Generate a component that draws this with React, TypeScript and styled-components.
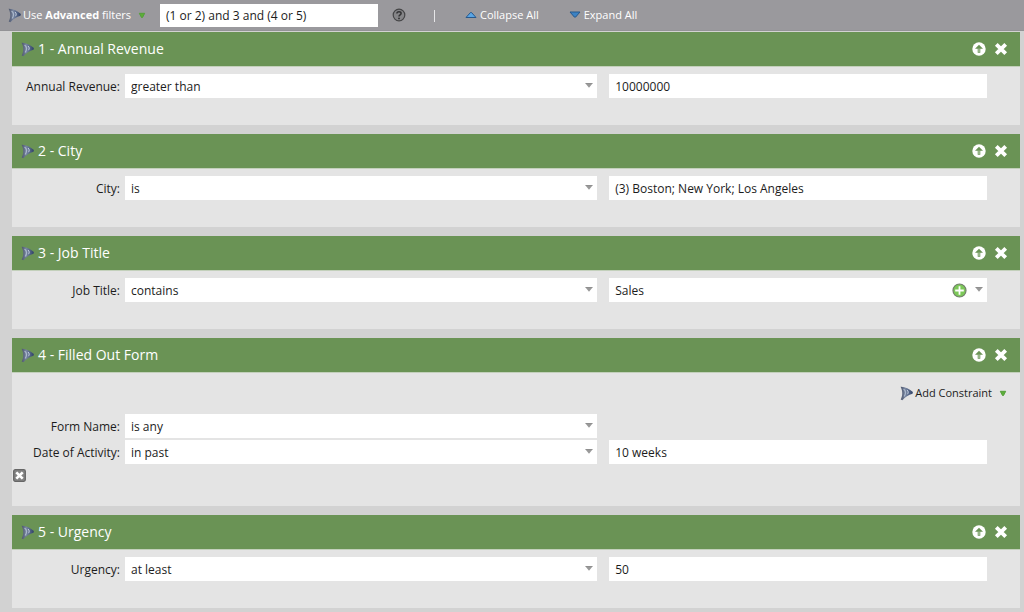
import React, { useId } from "react";
import styled, { createGlobalStyle } from "styled-components";

const GlobalStyle = createGlobalStyle`
  *, *::before, *::after { box-sizing: border-box; }
  body {
    margin: 0;
    background: #d2d2d2;
    color: #1c1c1c;
    font-family: "Open Sans", "Noto Sans", sans-serif;
    font-size: 12px;
  }
  button, input, select { font: inherit; color: inherit; }
  svg { flex-shrink: 0; }
`;

const Toolbar = styled.header`
  display: flex;
  align-items: center;
  height: 31px;
  padding: 0 8px;
  background: #9a999d;
  border-bottom: 1px solid #939396;
  color: #fff;
`;

const PlainButton = styled.button`
  display: inline-flex;
  align-items: center;
  gap: 2px;
  padding: 0;
  border: 0;
  background: none;
  font-size: 11px;
  line-height: 16px;
  white-space: nowrap;
  cursor: pointer;
`;

const ModeButton = styled(PlainButton)`
  width: 140px;
  margin-right: 12px;
`;

const MenuMark = styled.span`
  display: inline-flex;
  margin-left: 5px;
`;

const LogicInput = styled.input`
  width: 218px;
  height: 23px;
  padding: 0 6px;
  border: 0;
  background: #fff;
  color: #1c1c1c;
`;

const HelpButton = styled(PlainButton)`
  margin-left: 14px;
`;

const Divider = styled.span`
  width: 1px;
  height: 12px;
  margin: 2px 30px 0 28px;
  background: #e6e6e8;
`;

const ToolbarActions = styled.div`
  display: flex;
  gap: 30px;
`;

const ToolbarAction = styled(PlainButton)`
  gap: 3px;
`;

const CardList = styled.main`
  display: flex;
  flex-direction: column;
  gap: 9px;
  padding: 1px 4px 4px 12px;
`;

const Card = styled.section`
  background: #e4e4e4;
`;

const CardHeader = styled.div`
  display: flex;
  align-items: center;
  height: 34px;
  padding: 0 12px 0 9px;
  background: #6a9355;
  color: #fff;
`;

const CardTitle = styled.h2`
  flex: 1;
  margin: 0 0 0 4px;
  font-size: 14px;
  font-weight: 400;
  line-height: 20px;
`;

const HeaderActions = styled.div`
  display: flex;
  align-items: center;
  gap: 8px;
`;

const CardBody = styled.div`
  padding: 7px 33px 27px 0;
  border-top: 1px solid #c3d0bb;
`;

const ConstraintBar = styled.div`
  display: flex;
  justify-content: flex-end;
  height: 34px;
  padding-top: 5px;
  margin-right: -20px;
`;

const ConstraintButton = styled(PlainButton)`
  height: 16px;
`;

const Rows = styled.div`
  display: grid;
  gap: 2px;
`;

const Row = styled.div`
  display: grid;
  grid-template-columns: 113px minmax(0, 1fr);
  align-items: center;
`;

const RowLabel = styled.label`
  padding-right: 5px;
  text-align: right;
  white-space: nowrap;
`;

const RowFields = styled.div`
  display: grid;
  grid-template-columns: minmax(0, 5fr) minmax(0, 4fr);
  column-gap: 12px;
`;

const Field = styled.div`
  display: flex;
  align-items: center;
  height: 24px;
  background: #fff;
  position: relative;
`;

const Select = styled.select`
  appearance: none;
  width: 100%;
  height: 24px;
  padding: 0 20px 0 6px;
  border: 0;
  background: transparent;
`;

const SelectArrow = styled.span`
  position: absolute;
  top: 9px;
  right: 4px;
  display: flex;
  pointer-events: none;
`;

const ValueInput = styled.input`
  flex: 1;
  min-width: 0;
  height: 24px;
  padding: 0 6px;
  border: 0;
  background: transparent;
`;

const ValueTools = styled.div`
  display: flex;
  align-items: center;
  gap: 8px;
  padding-right: 4px;
`;

const RemoveBar = styled.div`
  display: flex;
  padding: 5px 0 0 1px;
  margin-bottom: -3px;
`;

const Funnel = () => (
  <svg width="13" height="15" viewBox="0 0 13 15" aria-hidden="true">
    <defs>
      <linearGradient id="funnelBody" x1="0" y1="0" x2="1" y2="0">
        <stop offset="0" stopColor="#4d566c" />
        <stop offset="0.4" stopColor="#76849f" />
        <stop offset="0.65" stopColor="#566789" />
        <stop offset="1" stopColor="#2f4166" />
      </linearGradient>
    </defs>
    <path d="M.6 .8C4.500 .5 9.500 3 12.900 5.900L12.500 7.700C8.500 8.800 5.200 11.200 2.400 14.200L.7 13.400C2.600 10.500 3 5.500 .6 .8Z" fill="url(#funnelBody)" />
    <path d="M3.600 3C5.800 4.800 6 7.700 4.200 10.500" fill="none" stroke="#aab7cb" strokeWidth="1.300" />
    <path d="M7 4C8.500 5.200 8.500 6.800 7.500 8.200" fill="none" stroke="#cfd9e8" strokeWidth=".9" />
  </svg>
);

const GreenArrow = () => (
  <svg width="8" height="7" viewBox="0 0 8 7" aria-hidden="true">
    <path d="M1.300 1.300H6.700L4.500 5.500H3.500Z" fill="#5cae38" stroke="#549f3a" strokeLinejoin="round" />
  </svg>
);

const GreyArrow = () => (
  <svg width="8" height="6" viewBox="0 0 8 6" aria-hidden="true">
    <path d="M.5 .5H7.500L4 4.800Z" fill="#999" />
    <path d="M.5 .5H7.500" stroke="#8f8f8f" />
  </svg>
);

const BlueArrow = ({ down = false }: { down?: boolean }) => (
  <svg width="12" height="8" viewBox="0 0 12 8" aria-hidden="true">
    <path
      d={down ? "M1 1H11L6.700 6Q6 6.700 5.300 6Z" : "M1 6.500H11L6.700 1.700Q6 1 5.300 1.700Z"}
      fill={down ? "#3b82c4" : "#5aa5e4"}
      stroke="#27588c"
      strokeLinejoin="round"
    />
  </svg>
);

const HelpIcon = () => (
  <svg width="14" height="14" viewBox="0 0 14 14" aria-hidden="true">
    <circle cx="7" cy="7" r="5.800" fill="#858588" stroke="#454547" strokeWidth="1.200" />
    <path d="M4.900 5.600C4.900 3.200 9.100 3.300 9.100 5.500C9.100 6.900 7 6.900 7 8.500" fill="none" stroke="#333335" strokeWidth="1.500" />
    <circle cx="7" cy="10.400" r=".95" fill="#333335" />
  </svg>
);

const UpIcon = () => (
  <svg width="14" height="14" viewBox="0 0 14 14" aria-hidden="true">
    <circle cx="7" cy="7" r="6.700" fill="#fff" />
    <path d="M7 2.700L11 6.800H8.300V10.700H5.700V6.800H3Z" fill="#6a9355" />
    <path d="M7 6.500V10" stroke="#dbe6d5" strokeWidth=".8" />
  </svg>
);

const CloseIcon = () => (
  <svg width="14" height="14" viewBox="0 0 14 14" aria-hidden="true">
    <path d="M2.300 2.300L11.700 11.700M11.700 2.300L2.300 11.700" stroke="#fff" strokeWidth="3.800" />
  </svg>
);

const PlusIcon = () => (
  <svg width="15" height="15" viewBox="0 0 15 15" aria-hidden="true">
    <circle cx="7.500" cy="7.500" r="6.500" fill="#7cc858" stroke="#71806a" strokeWidth="1.200" />
    <path d="M7.500 3.200V11.800M3.200 7.500H11.800" stroke="#fff" strokeWidth="1.800" />
  </svg>
);

const RemoveIcon = () => (
  <svg width="13" height="13" viewBox="0 0 13 13" aria-hidden="true">
    <rect x=".7" y=".7" width="11.600" height="11.600" rx="1.500" fill="#858585" stroke="#666" strokeWidth="1.300" />
    <path d="M3.300 3.300L9.700 9.700M9.700 3.300L3.300 9.700" stroke="#fff" strokeWidth="2.600" />
  </svg>
);

type Condition = { label: string; operator: string; value?: string; addable?: boolean };
type Filter = { title: string; conditions: Condition[]; constraints?: boolean };

const filters: Filter[] = [
  { title: "Annual Revenue", conditions: [{ label: "Annual Revenue:", operator: "greater than", value: "10000000" }] },
  { title: "City", conditions: [{ label: "City:", operator: "is", value: "(3) Boston; New York; Los Angeles" }] },
  { title: "Job Title", conditions: [{ label: "Job Title:", operator: "contains", value: "Sales", addable: true }] },
  {
    title: "Filled Out Form",
    constraints: true,
    conditions: [
      { label: "Form Name:", operator: "is any" },
      { label: "Date of Activity:", operator: "in past", value: "10 weeks" },
    ],
  },
  { title: "Urgency", conditions: [{ label: "Urgency:", operator: "at least", value: "50" }] },
];

function ConditionRow({ label, operator, value, addable }: Condition) {
  const id = useId();
  return (
    <Row>
      <RowLabel htmlFor={id}>{label}</RowLabel>
      <RowFields>
        <Field>
          <Select id={id} defaultValue={operator}>
            <option>{operator}</option>
          </Select>
          <SelectArrow><GreyArrow /></SelectArrow>
        </Field>
        {value !== undefined && (
          <Field>
            <ValueInput aria-label={`${label} value`} defaultValue={value} />
            {addable && (
              <ValueTools>
                <PlainButton aria-label="Choose values"><PlusIcon /></PlainButton>
                <PlainButton aria-label="Show values"><GreyArrow /></PlainButton>
              </ValueTools>
            )}
          </Field>
        )}
      </RowFields>
    </Row>
  );
}

function FilterCard({ index, filter }: { index: number; filter: Filter }) {
  return (
    <Card>
      <CardHeader>
        <Funnel />
        <CardTitle>{index} - {filter.title}</CardTitle>
        <HeaderActions>
          <PlainButton aria-label="Collapse filter"><UpIcon /></PlainButton>
          <PlainButton aria-label="Remove filter"><CloseIcon /></PlainButton>
        </HeaderActions>
      </CardHeader>
      <CardBody>
        {filter.constraints && (
          <ConstraintBar>
            <ConstraintButton>
              <Funnel />
              Add Constraint
              <MenuMark><GreenArrow /></MenuMark>
            </ConstraintButton>
          </ConstraintBar>
        )}
        <Rows>
          {filter.conditions.map((c) => <ConditionRow key={c.label} {...c} />)}
        </Rows>
        {filter.constraints && (
          <RemoveBar>
            <PlainButton aria-label="Remove constraint"><RemoveIcon /></PlainButton>
          </RemoveBar>
        )}
      </CardBody>
    </Card>
  );
}

export default function App() {
  return (
    <>
      <GlobalStyle />
      <Toolbar>
        <ModeButton>
          <Funnel />
          <span>Use <b>Advanced</b> filters</span>
          <MenuMark><GreenArrow /></MenuMark>
        </ModeButton>
        <LogicInput aria-label="Filter logic" defaultValue="(1 or 2) and 3 and (4 or 5)" />
        <HelpButton aria-label="Help"><HelpIcon /></HelpButton>
        <Divider />
        <ToolbarActions>
          <ToolbarAction><BlueArrow />Collapse All</ToolbarAction>
          <ToolbarAction><BlueArrow down />Expand All</ToolbarAction>
        </ToolbarActions>
      </Toolbar>
      <CardList>
        {filters.map((f, i) => <FilterCard key={f.title} index={i + 1} filter={f} />)}
      </CardList>
    </>
  );
}
